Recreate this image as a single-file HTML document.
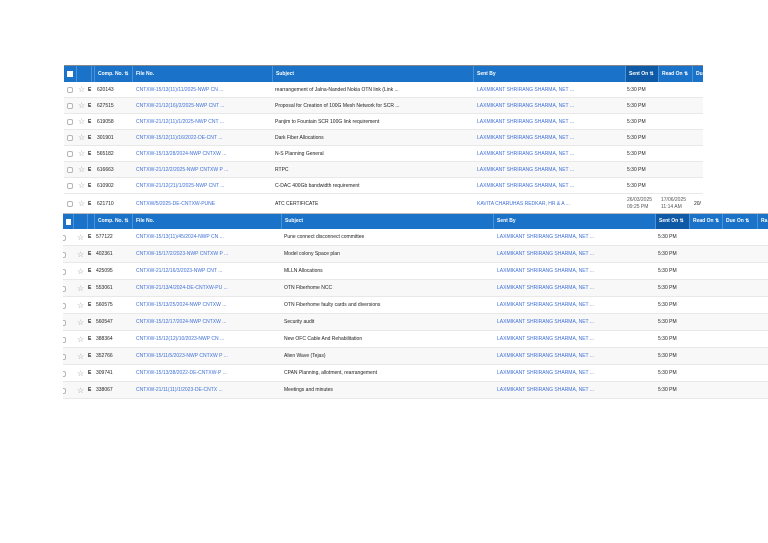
<!DOCTYPE html>
<html><head><style>
*{margin:0;padding:0;box-sizing:border-box}
body{width:768px;height:543px;background:#fff;position:relative;overflow:hidden;font-family:"Liberation Sans",sans-serif;font-size:5px;color:#222}
.h{position:absolute;background:#1a73c9;color:#fff;font-weight:bold}
.h div,.r div{position:absolute;top:0;white-space:nowrap}
.h div{border-left:1px solid #4b93d8;height:100%;padding-left:3px}
.s{background:#0f5aa6}
.r{position:absolute;border-bottom:1px solid #e8e8e8;overflow:hidden}
.r.g{background:#f8f8f8}
.l{color:#3d6fd8}
.cb{width:6px;height:6px;border:1px solid #b5b5b5;border-radius:2px;background:#fff}
.st{color:#999;font-size:8px}
</style></head><body>
<div style="position:absolute;left:64px;top:65px;width:639px;height:1px;background:#888"></div>
<div class="h" style="left:64px;top:66px;width:639px;height:16px;line-height:16px">
<div style="left:0;border:none"><span style="display:inline-block;width:6px;height:6px;background:#fff;margin-top:5px"></span></div>
<div style="left:12px"></div><div style="left:27px"></div>
<div style="left:30px">Comp. No. ⇅</div><div style="left:68px">File No.</div>
<div style="left:208px">Subject</div><div style="left:409px">Sent By</div>
<div class="s" style="left:561px;width:33px">Sent On ⇅</div><div style="left:594px">Read On ⇅</div><div style="left:628px">Du</div>
</div>
<div id="t1"></div>
<div style="position:absolute;left:63px;top:213px;width:705px;height:1px;background:#bbb"></div>
<div class="h" style="left:63px;top:214px;width:705px;height:15px;line-height:15px">
<div style="left:0;border:none"><span style="display:inline-block;width:5px;height:6px;background:#fff;margin-top:5px"></span></div>
<div style="left:10px"></div><div style="left:24px"></div>
<div style="left:31px">Comp. No. ⇅</div><div style="left:69px">File No.</div>
<div style="left:218px">Subject</div><div style="left:430px">Sent By</div>
<div class="s" style="left:592px;width:34px">Sent On ⇅</div><div style="left:626px">Read On ⇅</div><div style="left:659px">Due On ⇅</div><div style="left:694px">Ra</div>
</div>
<div id="t2"></div>
<script>
var d1=[["620143","CNTXW-15/13(11)/11/2025-NWP CN ...","rearrangement of Jalna-Nanded Nokia OTN link (Link ..."],
["627515","CNTXW-21/12(16)/2/2025-NWP CNT ...","Proposal for Creation of 100G Mesh Network for SCR ..."],
["619058","CNTXW-21/12(11)/1/2025-NWP CNT ...","Panjim to Fountain SCR 100G link requirement"],
["301901","CNTXW-15/12(11)/16/2022-DE-CNT ...","Dark Fiber Allocations"],
["565182","CNTXW-15/13/28/2024-NWP CNTXW ...","N-S Planning General"],
["616663","CNTXW-21/12/2/2025-NWP CNTXW P ...","RTPC"],
["610902","CNTXW-21/12(21)/1/2025-NWP CNT ...","C-DAC 400Gb bandwidth requirement"]];
var h="";var y=82;
d1.forEach(function(r,i){h+=row(64,y,639,16,r,[3,14,24,33,72,211,413,563],"LAXMIKANT SHRIRANG SHARMA, NET ...","5:30 PM",i%2);y+=16;});
h+='<div class="r" style="left:64px;top:'+y+'px;width:639px;height:20px;line-height:20px">'+
'<div style="left:3px;top:7px"><div class="cb"></div></div><div class="st" style="left:14px">☆</div><div style="left:24px;font-weight:bold">E</div><div style="left:33px">621710</div><div class="l" style="left:72px">CNTXW/5/2025-DE-CNTXW-PUNE</div><div style="left:211px">ATC CERTIFICATE</div><div class="l" style="left:413px">KAVITA CHARUHAS REDKAR, HR &amp; A ...</div><div style="left:563px;line-height:7px;top:3px;color:#555">26/03/2025<br>09:25 PM</div><div style="left:597px;line-height:7px;top:3px;color:#555">17/06/2025<br>11:14 AM</div><div style="left:630px">20/</div></div>';
document.getElementById("t1").outerHTML=h;
var d2=[["577122","CNTXW-15/13(11)/45/2024-NWP CN ...","Pune connect disconnect committee"],
["402361","CNTXW-15/17/2/2023-NWP CNTXW P ...","Model colony Space plan"],
["425095","CNTXW-21/12/16/3/2023-NWP CNT ...","MLLN Allocations"],
["553061","CNTXW-21/13/4/2024-DE-CNTXW-PU ...","OTN Fiberhome NCC"],
["560575","CNTXW-15/13/25/2024-NWP CNTXW ...","OTN Fiberhome faulty cards and diversions"],
["560547","CNTXW-15/12/17/2024-NWP CNTXW ...","Security audit"],
["388364","CNTXW-15/12(12)/10/2023-NWP CN ...","New OFC Cable And Rehabilitation"],
["352766","CNTXW-15/11/5/2023-NWP CNTXW P ...","Alien Wave (Tejas)"],
["309741","CNTXW-15/13/38/2022-DE-CNTXW-P ...","CPAN Planning, allotment, rearrangement"],
["338067","CNTXW-21/11(11)/1/2023-DE-CNTX ...","Meetings and minutes"]];
h="";y=229;
d2.forEach(function(r,i){h+=row(63,y,705,17,r,[-3,14,25,33,73,221,434,595],"LAXMIKANT SHRIRANG SHARMA, NET ...","5:30 PM",i%2);y+=17;});
document.getElementById("t2").outerHTML=h;
function row(x,y,w,hh,r,c,sb,so,g){return '<div class="r'+(g?' g':'')+'" style="left:'+x+'px;top:'+y+'px;width:'+w+'px;height:'+hh+'px;line-height:'+hh+'px">'+
'<div style="left:'+c[0]+'px;top:'+((hh-6)/2)+'px"><div class="cb"></div></div><div class="st" style="left:'+c[1]+'px">☆</div><div style="left:'+c[2]+'px;font-weight:bold">E</div><div style="left:'+c[3]+'px">'+r[0]+'</div><div class="l" style="left:'+c[4]+'px">'+r[1]+'</div><div style="left:'+c[5]+'px">'+r[2]+'</div><div class="l" style="left:'+c[6]+'px">'+sb+'</div><div style="left:'+c[7]+'px">'+so+'</div></div>';}
</script>
</body></html>
